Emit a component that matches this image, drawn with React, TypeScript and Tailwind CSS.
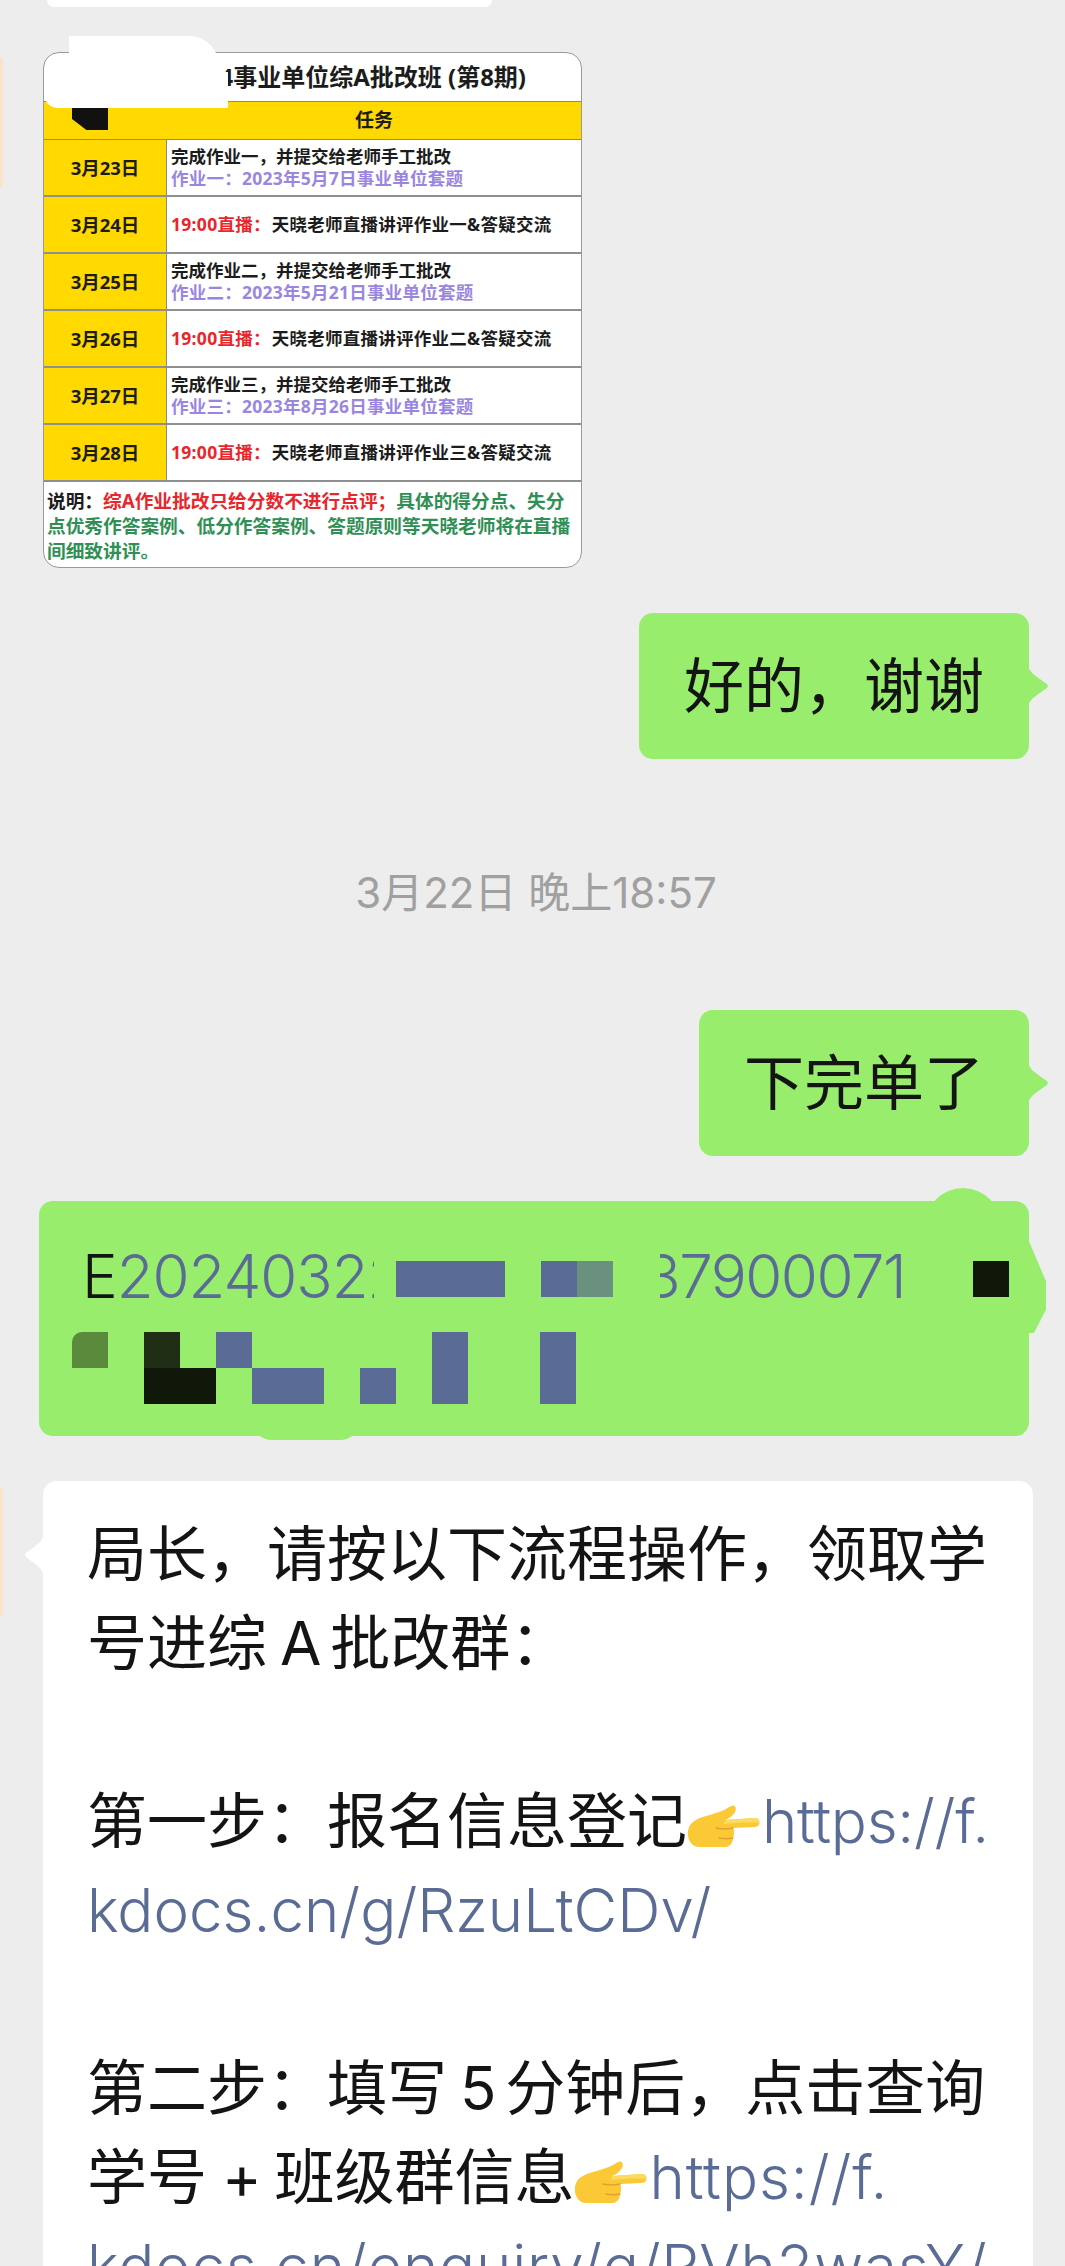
import React from 'react';

const cjk = "font-['Noto_Sans','Noto_Sans_CJK_SC',sans-serif]";
const chat = "font-['Inter','Noto_Sans_CJK_SC',sans-serif]";

const Hand = () => (
  <svg className="inline-block w-[75px] h-[42px] align-[-4px]" viewBox="-1 0 75 42">
    <path d="M0 26C1 18 8 14 15 12C25 9 36 6 43 1C47 -1 49 3 47 7C45 11 40 14 37 15L67 13C73 13 73 22 67 22L45 23C47 26 46 30 45 33C45 37 43 41 38 42L10 42C3 41 -1 34 0 26Z" fill="#fbc935" />
    <path d="M37 15L67 13C71 13 72 16 71 18C60 17 48 18 36 19Z" fill="#fcd95f" />
    <path d="M28 23C33 24 40 24 45 23M31 33C36 34 41 34 45 33" fill="none" stroke="#e3a02c" strokeWidth="1.4" strokeLinecap="round" />
  </svg>
);

const Tail = () => (
  <svg className="absolute left-full top-1/2 -translate-y-1/2 w-[19px] h-[36px]" viewBox="0 0 19 36">
    <path d="M0 0L0 36C2 31 5 29 18 20C19 19 19 17 18 16C5 7 2 5 0 0Z" fill="#98ee6c" />
  </svg>
);

const rows = [
  { date: '3月23日', n: '一', hw: '2023年5月7日事业单位套题', live: false },
  { date: '3月24日', n: '一', hw: '', live: true },
  { date: '3月25日', n: '二', hw: '2023年5月21日事业单位套题', live: false },
  { date: '3月26日', n: '二', hw: '', live: true },
  { date: '3月27日', n: '三', hw: '2023年8月26日事业单位套题', live: false },
  { date: '3月28日', n: '三', hw: '', live: true },
];

const Schedule = () => (
  <div className="relative w-[539px] h-[516px]">
    <div className={`w-full h-full flex flex-col rounded-[16px] border border-[#9a9a9a] bg-white overflow-hidden font-bold text-[#1c1c1c] ${cjk}`}>
      <div className="h-[49px] shrink-0 flex items-center justify-end pr-[55px] text-[24px] whitespace-nowrap border-b border-[#8a8a8a]">
        2024事业单位综A批改班 (第8期)
      </div>
      <div className="h-[38px] shrink-0 flex bg-[#ffd900] border-b border-[#8a8a8a]">
        <div className="w-[123px] shrink-0" />
        <div className="flex-1 flex items-center justify-center text-[19px]">任务</div>
      </div>
      {rows.map((r) => (
        <div key={r.date} className="h-[57px] shrink-0 flex border-b-2 border-[#8f8f8f]">
          <div className="w-[123px] shrink-0 flex items-center justify-center bg-[#ffd900] border-r border-[#8a8a8a] text-[18.5px]">
            {r.date}
          </div>
          {r.live ? (
            <div className="flex-1 flex items-center pl-[4px] text-[17.5px] whitespace-nowrap">
              <span className="text-[#e8262c] tracking-[0.3px]">19:00直播：</span>
              <span className="ml-[1px] tracking-[0.25px]">天晓老师直播讲评作业{r.n}&amp;答疑交流</span>
            </div>
          ) : (
            <div className="flex-1 flex flex-col justify-center pl-[4px] pb-[2px] text-[17.5px] leading-[22px] whitespace-nowrap">
              <div>完成作业{r.n}，并提交给老师手工批改</div>
              <div className="text-[#9a86e0] tracking-[0.25px]">作业{r.n}：{r.hw}</div>
            </div>
          )}
        </div>
      ))}
      <div className="flex-1 pl-[3px] pt-[6px] text-[18.7px] leading-[25px] whitespace-nowrap">
        <div>
          说明：<span className="text-[#e8262c]">综A作业批改只给分数不进行点评；</span>
          <span className="text-[#2f8f55]">具体的得分点、失分</span>
        </div>
        <div className="text-[#2f8f55]">点优秀作答案例、低分作答案例、答题原则等天晓老师将在直播</div>
        <div className="text-[#2f8f55]">间细致讲评。</div>
      </div>
    </div>
    {/* 涂抹遮挡 */}
    <div className="absolute left-[26px] top-[-16px] w-[150px] h-[56px] bg-white rounded-tr-[30px]" />
    <div className="absolute left-[1px] top-[20px] w-[184px] h-[36px] bg-white rounded-bl-[14px]" />
    <div className="absolute left-[29px] top-[56px] w-[36px] h-[22px] bg-[#111] [clip-path:polygon(0_0,100%_0,100%_100%,40%_100%,0_50%)]" />
  </div>
);

const App: React.FC = () => {
  const blue = 'bg-[#5a6c95]';

  return (
    <div className={`w-[1065px] h-[2266px] overflow-hidden bg-[#ededed] flex flex-col ${chat} text-[60px] text-[#141414]`}>
      <div className="h-[7px] shrink-0 w-[445px] ml-[47px] bg-white rounded-b-[12px]" />

      <div className="mt-[45px] flex items-start shrink-0">
        <div className="mt-[5px] w-[3px] h-[131px] bg-[#fbe3c9] rounded-r-[3px]" />
        <div className="ml-[40px]">
          <Schedule />
        </div>
      </div>

      <div className="relative self-end mr-[36px] mt-[45px] w-[390px] h-[146px] shrink-0 flex items-center justify-center rounded-[14px] bg-[#98ee6c]">
        好的，谢谢
        <Tail />
      </div>

      <div className="mt-[103px] h-[60px] shrink-0 flex items-center justify-center pl-[7px] text-[42px] text-[#a0a0a0] mb-[2px]">
        3月22日 晚上18:57
      </div>

      <div className="relative self-end mr-[36px] mt-[86px] w-[330px] h-[146px] shrink-0 flex items-center justify-center rounded-[14px] bg-[#98ee6c]">
        下完单了
        <Tail />
      </div>

      <div className="relative mt-[45px] ml-[39px] w-[990px] h-[235px] shrink-0 rounded-[14px] bg-[#98ee6c] pt-[33px]">
        <div className="absolute right-[28px] top-[-13px] w-[76px] h-[40px] rounded-t-[40px] bg-[#98ee6c]" />
        <div className="absolute left-[213px] bottom-[-4px] w-[108px] h-[20px] rounded-b-[30px] bg-[#98ee6c]" />
        <div className="absolute right-[-17px] top-[38px] w-[30px] h-[94px] bg-[#98ee6c] [clip-path:polygon(0_0,40%_0,100%_45%,100%_75%,60%_100%,0_100%)]" />

        <div className="relative flex items-center h-[89px] pl-[43px] leading-none">
          <div className="w-[292px] pb-[5px] overflow-hidden whitespace-nowrap tracking-[-1px] font-light">
            E<span className="text-[#5a6c95]">20240322</span>
          </div>
          <div className={`ml-[22px] w-[109px] h-[36px] ${blue}`} />
          <div className={`ml-[36px] w-[36px] h-[36px] ${blue}`} />
          <div className="w-[36px] h-[36px] bg-[#6a9180]" />
          <div className="ml-[47px] w-[245px] pb-[5px] overflow-hidden flex justify-end whitespace-nowrap tracking-[-1.5px] font-light text-[#5a6c95]">37900071</div>
          <div className="ml-[68px] w-[36px] h-[36px] bg-[#10180a]" />
        </div>

        <div className="relative mt-[9px] ml-[33px] grid grid-cols-[repeat(14,36px)] grid-rows-[repeat(2,36px)]">
          <div className="col-start-1 row-start-1 bg-[#5a8a3c] rounded-tl-[10px]" />
          <div className="col-start-3 row-start-1 bg-[#1f2e14]" />
          <div className={`col-start-5 row-start-1 ${blue}`} />
          <div className="col-start-3 col-span-2 row-start-2 bg-[#10180a]" />
          <div className={`col-start-6 col-span-2 row-start-2 ${blue}`} />
          <div className={`col-start-9 row-start-2 ${blue}`} />
          <div className={`col-start-11 row-start-1 row-span-2 ${blue}`} />
          <div className={`col-start-14 row-start-1 row-span-2 ${blue}`} />
        </div>
      </div>

      <div className="relative mt-[45px] flex items-start shrink-0">
        <div className="mt-[7px] w-[3px] h-[129px] bg-[#fbe3c9] rounded-r-[3px]" />
        <div className="relative ml-[40px] w-[990px] bg-white rounded-[14px] pl-[44px] pt-[29px] pb-[30px] leading-[89px] whitespace-nowrap">
          <svg className="absolute right-full top-[56px] w-[18px] h-[36px]" viewBox="0 0 18 36">
            <path d="M18 0L18 36C16 31 13 29 1 20C0 19 0 17 1 16C13 7 16 5 18 0Z" fill="#fff" />
          </svg>
          <div>局长，请按以下流程操作，领取学</div>
          <div>号进综<span className="tracking-[-4px]">{' A '}</span>批改群：</div>
          <div className="h-[89px]" />
          <div>第一步：报名信息登记<Hand /><span className="text-[#5a6c95] font-light tracking-[-0.3px]">https://f.</span></div>
          <div className="text-[#5a6c95] font-light">kdocs.cn/g/RzuLtCDv/</div>
          <div className="h-[89px]" />
          <div>第二步：填写<span className="tracking-[-4px]">{' 5 '}</span>分钟后，点击查询</div>
          <div>学号<span className="tracking-[-2px]">{' + '}</span>班级群信息<Hand /><span className="text-[#5a6c95] font-light tracking-[0.9px]">https://f.</span></div>
          <div className="text-[#5a6c95] font-light tracking-[0.8px]">kdocs.cn/enquiry/g/RVh2wasY/</div>
        </div>
      </div>
    </div>
  );
};

export default App;
